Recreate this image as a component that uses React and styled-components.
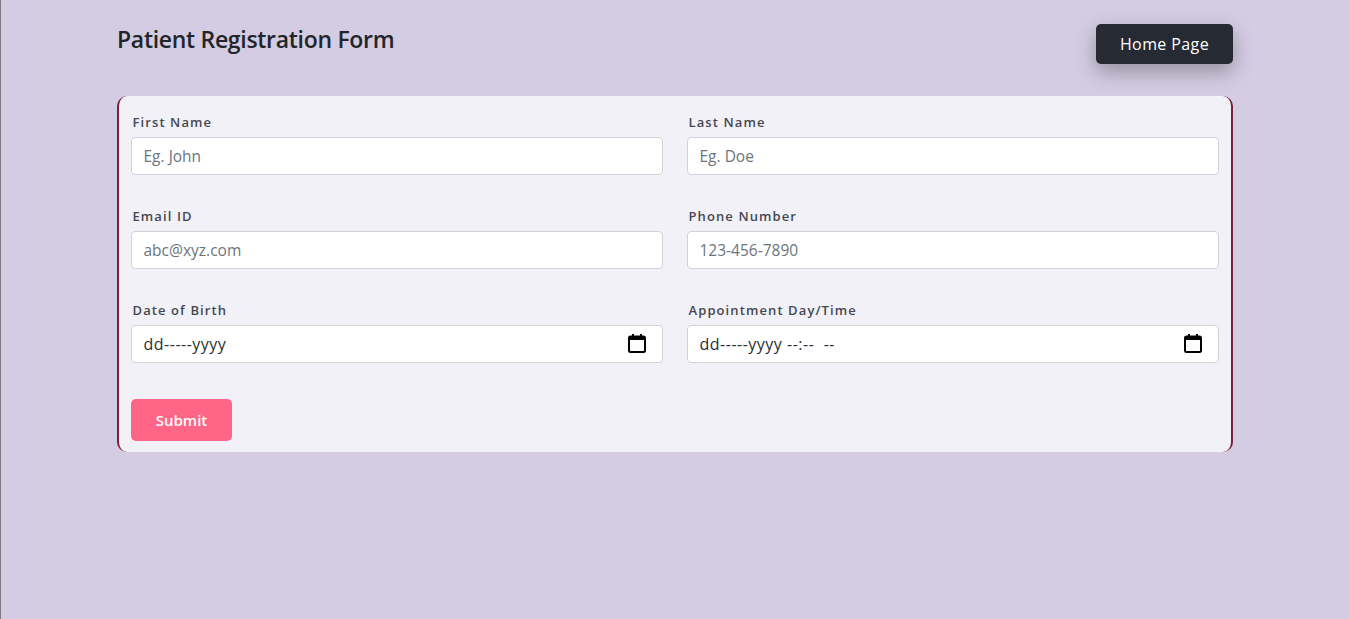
import React from "react";
import styled, { createGlobalStyle } from "styled-components";

const GlobalStyle = createGlobalStyle`
  * {
    box-sizing: border-box;
  }
  html, body {
    margin: 0;
    min-height: 100%;
  }
  body {
    min-height: 619px;
    background-color: #d4cce3;
    border-left: 1px solid #7d7a85;
    font-family: "Open Sans", "Noto Sans", sans-serif;
    color: #212529;
  }
`;

const CalendarIcon = () => (
  <svg width="18" height="20" viewBox="0 0 18 20" fill="none">
    <rect x="1" y="3.5" width="16" height="15.5" rx="1.5" stroke="#000" strokeWidth="2" />
    <rect x="1" y="3.5" width="16" height="3.5" fill="#000" />
    <rect x="4" y="1" width="2" height="3" fill="#000" />
    <rect x="12" y="1" width="2" height="3" fill="#000" />
  </svg>
);

const fields = [
  { label: "First Name", placeholder: "Eg. John" },
  { label: "Last Name", placeholder: "Eg. Doe" },
  { label: "Email ID", placeholder: "abc@xyz.com" },
  { label: "Phone Number", placeholder: "123-456-7890" },
  { label: "Date of Birth", value: "dd-----yyyy" },
  { label: "Appointment Day/Time", value: "dd-----yyyy --:--  --" },
];

const App = () => {
  return (
    <>
      <GlobalStyle />
      <Container>
        <Header>
          <Title>Patient Registration Form</Title>
          <HomeButton type="button">Home Page</HomeButton>
        </Header>
        <Card>
          <FieldGrid>
            {fields.map((f) => (
              <Field key={f.label}>
                <Label>{f.label}</Label>
                <InputWrap>
                  {f.value ? (
                    <DateInput type="text" value={f.value} readOnly />
                  ) : (
                    <Input type="text" placeholder={f.placeholder} />
                  )}
                  {f.value && (
                    <IconSlot>
                      <CalendarIcon />
                    </IconSlot>
                  )}
                </InputWrap>
              </Field>
            ))}
          </FieldGrid>
          <SubmitButton type="button">Submit</SubmitButton>
        </Card>
      </Container>
    </>
  );
};

export default App;

const Container = styled.div`
  width: 1116px;
  margin-left: 116px;
`;
const Header = styled.div`
  display: flex;
  justify-content: space-between;
  align-items: flex-start;
  height: 96px;
`;
const Title = styled.h1`
  margin: 23px 0 0;
  font-size: 23px;
  line-height: 33px;
  font-weight: 600;
  letter-spacing: -0.3px;
  color: #212529;
`;
const HomeButton = styled.button`
  margin-top: 24px;
  width: 137px;
  height: 40px;
  border: none;
  border-radius: 5px;
  background-color: #252a33;
  color: #fff;
  font-family: inherit;
  font-size: 16px;
  letter-spacing: 0.4px;
  box-shadow: 0 8px 20px rgba(33, 37, 41, 0.35);
`;
const Card = styled.div`
  height: 356px;
  padding: 16px 12px 11px;
  background-color: #f2f1f8;
  border-left: 2px solid #7b1f3a;
  border-right: 2px solid #7b1f3a;
  border-radius: 10px;
`;
const FieldGrid = styled.div`
  display: grid;
  grid-template-columns: 532px 532px;
  column-gap: 24px;
  row-gap: 31px;
`;
const Field = styled.div`
  display: flex;
  flex-direction: column;
`;
const Label = styled.label`
  height: 21px;
  margin-bottom: 4px;
  padding-left: 1.5px;
  font-size: 13px;
  line-height: 20px;
  font-weight: 600;
  letter-spacing: 1.1px;
  color: #454850;
`;
const InputWrap = styled.div`
  position: relative;
`;
const Input = styled.input`
  display: block;
  width: 100%;
  height: 38px;
  padding: 0 11.5px;
  border: 1px solid #ced4da;
  border-radius: 4px;
  background-color: #fff;
  font-family: inherit;
  font-size: 15.5px;
  color: #212529;
  outline: none;
  &::placeholder {
    color: #6c757d;
    opacity: 1;
  }
`;
const DateInput = styled(Input)`
  font-size: 16px;
  letter-spacing: 0.5px;
  color: #2b2f33;
`;
const IconSlot = styled.span`
  position: absolute;
  right: 17px;
  top: 8px;
  display: flex;
  pointer-events: none;
`;
const SubmitButton = styled.button`
  display: block;
  margin-top: 36px;
  width: 101px;
  height: 42px;
  border: none;
  border-radius: 5px;
  background-color: #ff6586;
  color: #fff;
  font-family: inherit;
  font-size: 15px;
  font-weight: 600;
`;
